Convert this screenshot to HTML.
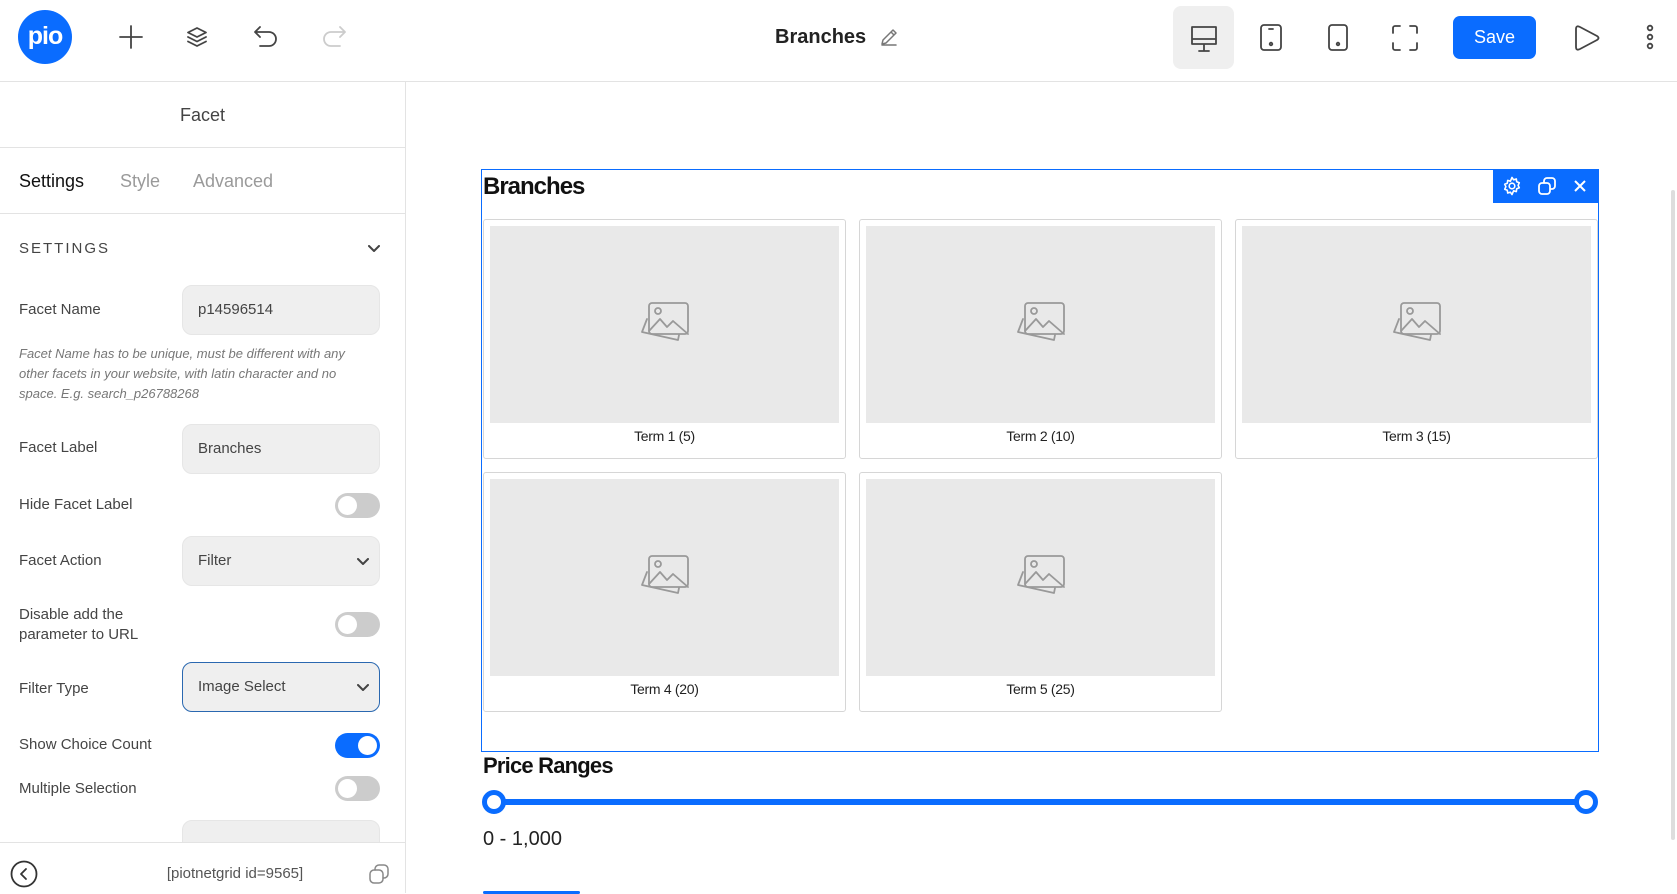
<!DOCTYPE html>
<html><head><meta charset="utf-8"><style>
*{box-sizing:border-box;margin:0;padding:0}
body{width:1677px;height:893px;overflow:hidden;background:#fff;font-family:"Liberation Sans",Arial,sans-serif;position:relative;color:#333}
.abs{position:absolute}
.hdr{left:0;top:0;width:1677px;height:82px;border-bottom:1px solid #e3e3e3}
.ic{stroke:#444;fill:none;stroke-width:1.8;stroke-linecap:round;stroke-linejoin:round}
.lp{left:0;top:82px;width:406px;height:811px;border-right:1px solid #e3e3e3}
.lbl{position:absolute;left:19px;font-size:15px;color:#444}
.inp{position:absolute;left:182px;width:198px;height:50px;background:#efefef;border:1px solid #e6e6e6;border-radius:10px;font-size:15px;color:#444;padding-left:15px;line-height:48px}
.tg{position:absolute;left:335px;width:45px;height:25px;border-radius:13px;background:#ccc}
.tg::after{content:"";position:absolute;left:3px;top:3px;width:19px;height:19px;border-radius:50%;background:#fff}
.tg.on{background:#0a6cff}.tg.on::after{left:23px}
.chev{position:absolute;right:10px;top:21px}
.card{position:absolute;width:363px;height:240px;border:1px solid #d6d6d6;border-radius:3px}
.img{position:absolute;left:6px;top:6px;width:349px;height:197px;background:#e9e9e9}
.img svg{position:absolute;left:149px;top:75px}
.term{position:absolute;left:0;right:0;top:208px;text-align:center;font-size:14px;color:#222;letter-spacing:-.3px}
</style></head><body>
<div class="abs hdr">
 <div class="abs" style="left:18px;top:10px;width:54px;height:54px;border-radius:50%;background:#0a6cff;color:#fff;font-weight:bold;font-size:25px;text-align:center;line-height:52px;letter-spacing:-1px">pio</div>
 <svg class="abs" style="left:118px;top:24px" width="26" height="26"><path class="ic" d="M13 2v22M2 13h22"/></svg>
 <svg class="abs" style="left:185px;top:25px" width="24" height="24"><path class="ic" d="M12 3l9 4.5-9 4.5-9-4.5zM3 12l9 4.5 9-4.5M3 16.5l9 4.5 9-4.5"/></svg>
 <svg class="abs" style="left:252px;top:26px" width="28" height="22"><path class="ic" d="M3 6h14a7 7 0 010 14H8M3 6l5-5M3 6l5 5"/></svg>
 <svg class="abs" style="left:320px;top:26px" width="28" height="22"><path class="ic" style="stroke:#ccc" d="M25 6H11a7 7 0 000 14h9M25 6l-5-5M25 6l-5 5"/></svg>
 <div class="abs" style="left:775px;top:26px;font-size:20px;font-weight:bold;color:#222">Branches</div>
 <svg class="abs" style="left:880px;top:28px" width="18" height="18"><path class="ic" style="stroke:#777;stroke-width:1.5" d="M2 16l1-4L13 2l3 3L6 15zM11 4l3 3M2 17h14"/></svg>
 <div class="abs" style="left:1173px;top:6px;width:61px;height:63px;border-radius:8px;background:#efefef"></div>
 <svg class="abs" style="left:1189px;top:24px" width="30" height="30"><path class="ic" d="M3 3h24v17H3zM3 15h24M15 20v6M10 27h10"/></svg>
 <svg class="abs" style="left:1259px;top:24px" width="24" height="28"><rect class="ic" x="2" y="1" width="20" height="25" rx="3"/><path class="ic" d="M10 5h4"/><circle class="ic" cx="12" cy="20" r="1.3"/></svg>
 <svg class="abs" style="left:1327px;top:24px" width="22" height="28"><rect class="ic" x="2" y="1" width="18" height="25" rx="3"/><circle class="ic" cx="11" cy="20" r="1.3"/></svg>
 <svg class="abs" style="left:1391px;top:24px" width="28" height="28"><path class="ic" d="M2 9V4a2 2 0 012-2h5M19 2h5a2 2 0 012 2v5M26 19v5a2 2 0 01-2 2h-5M9 26H4a2 2 0 01-2-2v-5"/></svg>
 <div class="abs" style="left:1453px;top:16px;width:83px;height:43px;border-radius:7px;background:#0a6cff;color:#fff;font-size:18px;text-align:center;line-height:43px">Save</div>
 <svg class="abs" style="left:1572px;top:24px" width="30" height="28"><path class="ic" d="M4 5q0-4 4-2l17 9q3 2 0 4L8 25q-4 2-4-2z"/></svg>
 <svg class="abs" style="left:1643px;top:24px" width="14" height="28"><circle class="ic" cx="7" cy="4" r="2.3"/><circle class="ic" cx="7" cy="13" r="2.3"/><circle class="ic" cx="7" cy="22" r="2.3"/></svg>
</div>
<div class="abs lp">
 <div class="abs" style="left:0;top:0;width:405px;height:66px;border-bottom:1px solid #e3e3e3;text-align:center;line-height:66px;font-size:18px;color:#444">Facet</div>
 <div class="abs" style="left:0;top:66px;width:405px;height:66px;border-bottom:1px solid #e3e3e3;font-size:18px;line-height:66px">
  <span class="abs" style="left:19px;color:#111">Settings</span><span class="abs" style="left:120px;color:#9a9a9a">Style</span><span class="abs" style="left:193px;color:#9a9a9a">Advanced</span></div>
 <div class="abs" style="left:19px;top:158px;font-size:15px;letter-spacing:2px;color:#444">SETTINGS</div>
 <svg class="abs" style="left:368px;top:163px" width="12" height="8"><path class="ic" style="stroke-width:2" d="M1 1l5 5 5-5"/></svg>
 <div class="lbl" style="top:219px">Facet Name</div><div class="inp" style="top:203px">p14596514</div>
 <div class="abs" style="left:19px;top:262px;width:340px;font-size:13px;font-style:italic;color:#777;line-height:20px">Facet Name has to be unique, must be different with any other facets in your website, with latin character and no space. E.g. search_p26788268</div>
 <div class="lbl" style="top:357px">Facet Label</div><div class="inp" style="top:342px">Branches</div>
 <div class="lbl" style="top:414px">Hide Facet Label</div><div class="tg" style="top:411px"></div>
 <div class="lbl" style="top:470px">Facet Action</div><div class="inp" style="top:454px">Filter<svg class="chev" width="12" height="8"><path class="ic" style="stroke-width:2" d="M1 1l5 5 5-5"/></svg></div>
 <div class="lbl" style="top:523px;line-height:20px">Disable add the<br>parameter to URL</div><div class="tg" style="top:530px"></div>
 <div class="lbl" style="top:598px">Filter Type</div><div class="inp" style="top:580px;border-color:#2a68b0">Image Select<svg class="chev" width="12" height="8"><path class="ic" style="stroke-width:2" d="M1 1l5 5 5-5"/></svg></div>
 <div class="lbl" style="top:654px">Show Choice Count</div><div class="tg on" style="top:651px"></div>
 <div class="lbl" style="top:698px">Multiple Selection</div><div class="tg" style="top:694px"></div>
 <div class="inp" style="top:738px"></div>
 <div class="abs" style="left:0;top:760px;width:405px;height:51px;background:#fff;border-top:1px solid #e3e3e3">
  <svg class="abs" style="left:10px;top:17px" width="28" height="28"><circle class="ic" cx="14" cy="14" r="12.5" style="stroke:#333"/><path class="ic" d="M16 9l-5 5 5 5" style="stroke:#333"/></svg>
  <div class="abs" style="left:60px;width:350px;top:22px;text-align:center;font-size:15px;color:#555">[piotnetgrid id=9565]</div>
  <svg class="abs" style="left:368px;top:20px" width="22" height="22"><rect class="ic" style="stroke:#888;stroke-width:1.5" x="2" y="7" width="13" height="13" rx="4"/><path class="ic" style="stroke:#888;stroke-width:1.5" d="M7 7V6a4 4 0 014-4h5a4 4 0 014 4v5a4 4 0 01-4 4h-1"/></svg>
 </div>
</div>
<div class="abs" style="left:1671px;top:190px;width:4px;height:650px;background:#ddd;border-radius:2px"></div>
<div class="abs" style="left:481px;top:169px;width:1118px;height:583px;border:1px solid #0a6cff"></div>
<div class="abs" style="left:483px;top:173px;font-size:24px;font-weight:bold;color:#111;letter-spacing:-1px">Branches</div>
<div class="abs" style="left:1493px;top:169px;width:106px;height:34px;background:#0a6cff">
 <svg class="abs" style="left:9px;top:7px" width="20" height="20"><circle cx="10" cy="10" r="2.8" fill="none" stroke="#fff" stroke-width="1.6"/><path d="M10 1.5l1.6 2.3 2.7-.8.4 2.8 2.6 1-1.2 2.5 1.2 2.5-2.6 1-.4 2.8-2.7-.8L10 18.5l-1.6-2.3-2.7.8-.4-2.8-2.6-1 1.2-2.5-1.2-2.5 2.6-1 .4-2.8 2.7.8z" fill="none" stroke="#fff" stroke-width="1.6" stroke-linejoin="round"/></svg>
 <svg class="abs" style="left:44px;top:7px" width="20" height="20"><rect x="2" y="7" width="11" height="11" rx="3" fill="none" stroke="#fff" stroke-width="1.8"/><path d="M7 7V5a3 3 0 013-3h5a3 3 0 013 3v5a3 3 0 01-3 3h-2" fill="none" stroke="#fff" stroke-width="1.8"/></svg>
 <svg class="abs" style="left:80px;top:10px" width="14" height="14"><path d="M2 2l10 10M12 2L2 12" stroke="#fff" stroke-width="2"/></svg>
</div>
<div class="card" style="left:483px;top:219px"><div class="img"><svg width="52" height="48"><g class="ic" style="stroke:#999;stroke-width:1.8"><rect x="10" y="2" width="39" height="31" rx="3"/><circle cx="19" cy="10" r="3"/><path d="M10 30l11-12 7 8 6-6 15 13M8 18l-5 13 36 8 1-5"/></g></svg></div><div class="term">Term 1 (5)</div></div>
<div class="card" style="left:859px;top:219px"><div class="img"><svg width="52" height="48"><g class="ic" style="stroke:#999;stroke-width:1.8"><rect x="10" y="2" width="39" height="31" rx="3"/><circle cx="19" cy="10" r="3"/><path d="M10 30l11-12 7 8 6-6 15 13M8 18l-5 13 36 8 1-5"/></g></svg></div><div class="term">Term 2 (10)</div></div>
<div class="card" style="left:1235px;top:219px"><div class="img"><svg width="52" height="48"><g class="ic" style="stroke:#999;stroke-width:1.8"><rect x="10" y="2" width="39" height="31" rx="3"/><circle cx="19" cy="10" r="3"/><path d="M10 30l11-12 7 8 6-6 15 13M8 18l-5 13 36 8 1-5"/></g></svg></div><div class="term">Term 3 (15)</div></div>
<div class="card" style="left:483px;top:472px"><div class="img"><svg width="52" height="48"><g class="ic" style="stroke:#999;stroke-width:1.8"><rect x="10" y="2" width="39" height="31" rx="3"/><circle cx="19" cy="10" r="3"/><path d="M10 30l11-12 7 8 6-6 15 13M8 18l-5 13 36 8 1-5"/></g></svg></div><div class="term">Term 4 (20)</div></div>
<div class="card" style="left:859px;top:472px"><div class="img"><svg width="52" height="48"><g class="ic" style="stroke:#999;stroke-width:1.8"><rect x="10" y="2" width="39" height="31" rx="3"/><circle cx="19" cy="10" r="3"/><path d="M10 30l11-12 7 8 6-6 15 13M8 18l-5 13 36 8 1-5"/></g></svg></div><div class="term">Term 5 (25)</div></div>
<div class="abs" style="left:483px;top:753px;font-size:22px;font-weight:bold;color:#111;letter-spacing:-.8px">Price Ranges</div>
<div class="abs" style="left:494px;top:799px;width:1092px;height:6px;background:#0a6cff"></div>
<div class="abs" style="left:482px;top:790px;width:24px;height:24px;border-radius:50%;border:5px solid #0a6cff;background:#fff"></div>
<div class="abs" style="left:1574px;top:790px;width:24px;height:24px;border-radius:50%;border:5px solid #0a6cff;background:#fff"></div>
<div class="abs" style="left:483px;top:828px;font-size:20px;color:#222">0 - 1,000</div>
<div class="abs" style="left:483px;top:891px;width:97px;height:3px;background:#0a6cff;border-radius:2px"></div>
</body></html>
